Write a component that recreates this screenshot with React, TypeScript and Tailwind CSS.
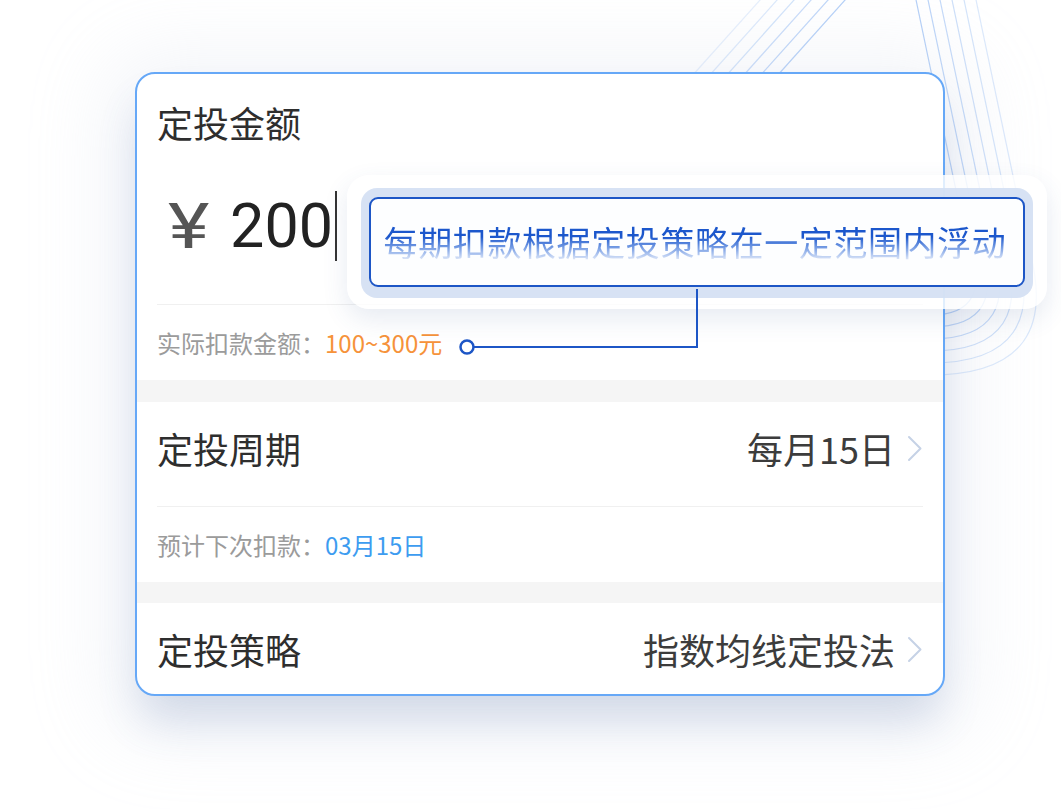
import React from "react";

function Chevron() {
  return (
    <svg width="16" height="27" viewBox="0 0 16 27" className="ml-[12px] shrink-0">
      <path d="M2 2 L13.5 13.5 L2 25" fill="none" stroke="#c6d2e6" strokeWidth="2" strokeLinecap="round" strokeLinejoin="round" />
    </svg>
  );
}

function Decorations() {
  const diag = [0, 1, 2, 3, 4, 5];
  const curves = [0, 1, 2, 3, 4, 5];
  return (
    <svg className="absolute inset-0 z-0 pointer-events-none" width="1061" height="809" viewBox="0 0 1061 809">
      {diag.map((i) => {
        const bx = 695 + 17 * i;
        return (
          <line
            key={"d" + i}
            x1={bx - 12}
            y1={86}
            x2={bx + 74}
            y2={-10}
            stroke="#9cc0f4"
            strokeWidth="1.2"
            strokeOpacity={0.25 + i * 0.1}
          />
        );
      })}
      {curves.map((i) => {
        const sx = 915 + 12 * i;
        const px = sx + 0.21 * 245;
        const ey = 315 + 12 * i;
        const qx = px + 0.21 * (ey - 240) + 14;
        return (
          <path
            key={"c" + i}
            d={`M ${sx} -5 L ${px} 240 Q ${qx} ${ey} ${930} ${ey}`}
            fill="none"
            stroke="#9cc0f4"
            strokeWidth="1.2"
            strokeOpacity={0.75 - i * 0.08}
          />
        );
      })}
    </svg>
  );
}

export default function App() {
  return (
    <div className="relative w-[1061px] h-[809px] overflow-hidden bg-white font-['Noto_Sans_CJK_SC','Noto_Sans',sans-serif]">
      <Decorations />

      {/* Card */}
      <div className="relative z-10 ml-[135px] mt-[72px] w-[810px] h-[624px] rounded-[20px] border-2 border-[#66a8f7] bg-white overflow-hidden shadow-[0_30px_44px_-6px_rgba(70,100,160,0.2),0_10px_80px_30px_rgba(195,205,225,0.2)]">
        <div className="px-5">
          <div className="h-[102px] flex items-center pb-[6px] text-[36px] leading-none text-[#2e2e2e]">定投金额</div>
          <div className="h-[100px] flex items-center">
            <span className="ml-[11px] inline-block origin-left scale-x-[1.25] font-['Roboto',sans-serif] text-[63px] leading-none text-[#555555]">¥</span>
            <span className="ml-[29px] font-['Roboto',sans-serif] text-[61px] leading-none text-[#222222]">200</span>
            <span className="ml-[2px] w-[2px] h-[70px] bg-[#333333]" />
          </div>
          <div className="h-[28px]" />
          <div className="h-px bg-[#f0f0f0]" />
          <div className="h-[75px] flex items-center text-[24px] leading-none pt-[1px]">
            <span className="text-[#9b9b9b]">实际扣款金额：</span>
            <span className="text-[#f6923a]">100~300元</span>
          </div>
        </div>
        <div className="h-[22px] bg-[#f5f5f5]" />
        <div className="px-5">
          <div className="h-[98px] flex items-center justify-between pb-[6px]">
            <span className="text-[36px] leading-none text-[#2e2e2e]">定投周期</span>
            <span className="flex items-center text-[36px] leading-none text-[#3c3c3c]">
              每月15日
              <Chevron />
            </span>
          </div>
          <div className="h-[6px]" />
          <div className="h-px bg-[#f0f0f0]" />
          <div className="h-[75px] flex items-center text-[24px] leading-none">
            <span className="text-[#9b9b9b]">预计下次扣款：</span>
            <span className="text-[#3d9cf0]">03月15日</span>
          </div>
        </div>
        <div className="h-[21px] bg-[#f5f5f5]" />
        <div className="px-5 h-[91px] pt-[1px] flex items-center justify-between">
          <span className="text-[36px] leading-none text-[#2e2e2e]">定投策略</span>
          <span className="flex items-center text-[36px] leading-none text-[#3c3c3c]">
            指数均线定投法
            <Chevron />
          </span>
        </div>
      </div>

      {/* Tooltip overlay */}
      <div className="absolute z-20 left-[347px] top-[175px] w-[700px] h-[134px] rounded-[22px] bg-white/80 shadow-[0_10px_26px_rgba(60,90,150,0.12)] pl-[14px] pr-[14px] pt-[13px] pb-[11px]">
        <div className="h-full rounded-[16px] bg-[#d3dff3]/90 px-[8px] pt-[9px] pb-[11px]">
          <div className="h-full rounded-[9px] border-2 border-[#1d56c6] bg-white/95 flex items-center justify-center pr-[4px]">
            <span className="text-[34px] leading-[1.25] tracking-[0.6px] bg-linear-to-b from-[#1c57cc] from-[38%] to-[#d6e1f6] to-[90%] bg-clip-text text-transparent">
              每期扣款根据定投策略在一定范围内浮动
            </span>
          </div>
        </div>
      </div>

      {/* Connector */}
      <svg className="absolute inset-0 z-30 pointer-events-none" width="1061" height="809" viewBox="0 0 1061 809">
        <path d="M 474 347 H 697 V 289" fill="none" stroke="#1d56c6" strokeWidth="2" />
        <circle cx="467" cy="347" r="6.5" fill="white" stroke="#1d56c6" strokeWidth="2.5" />
      </svg>
    </div>
  );
}
